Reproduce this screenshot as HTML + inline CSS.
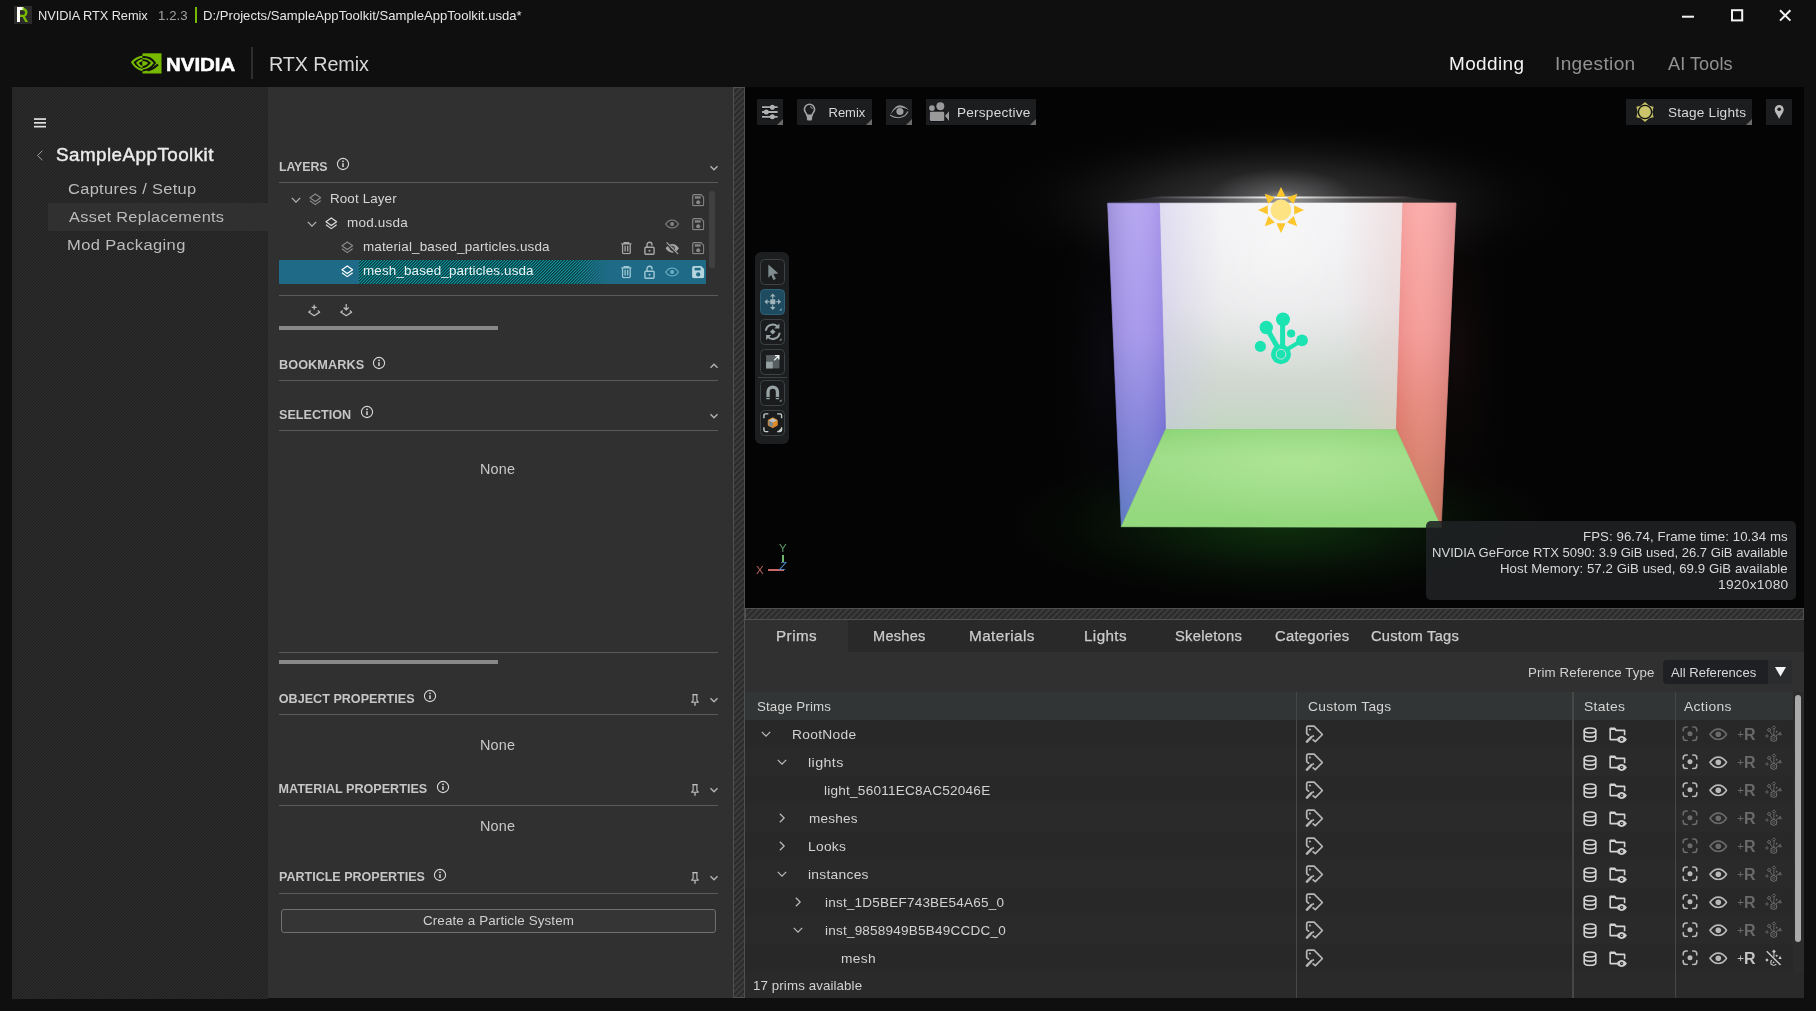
<!DOCTYPE html>
<html lang="en"><head><meta charset="utf-8"><title>NVIDIA RTX Remix</title>
<style>
html,body{margin:0;padding:0}
body{width:1816px;height:1011px;background:#0f0f0f;position:relative;overflow:hidden;font-family:"Liberation Sans",sans-serif;}
.t{position:absolute;white-space:pre;line-height:20px;height:20px;}
.i{position:absolute;overflow:visible;}
.hatch{background-color:#202020;background-image:repeating-linear-gradient(135deg,#2a2a2a 0,#2a2a2a 0.7px,#202020 1.06px,#202020 1.77px,#2a2a2a 2.1213px);}
.split{background-color:#2a2a2a;background-image:repeating-linear-gradient(135deg,#3a3a3a 0,#3a3a3a 1.5px,#2a2a2a 2.3px,#2a2a2a 3.4px,#3a3a3a 4.2px);border:1px solid #505050;box-sizing:border-box;}
.hl{position:absolute;height:1px;background:#5a5a5a;}
</style></head><body><div id="root" style="position:absolute;left:0;top:0;width:1816px;height:1011px;will-change:transform;">
<div style="position:absolute;left:12px;top:87px;width:256px;height:912px;"><div class="hatch" style="width:100%;height:100%"></div></div><div style="position:absolute;left:268px;top:87px;width:465px;height:911px;background:#303030;"></div><div style="position:absolute;left:733px;top:87px;width:12px;height:911px;"><div class="split" style="width:100%;height:100%"></div></div><div style="position:absolute;left:745px;top:608px;width:1059px;height:12px;"><div class="split" style="width:100%;height:100%"></div></div><div style="position:absolute;left:745px;top:620px;width:1059px;height:378px;background:#2a2a2a;"></div><svg width="0" height="0" style="position:absolute"><defs>
<symbol id="chev-d" viewBox="0 0 10 10"><path d="M1.500 3.200L5 6.800 8.500 3.200" fill="none" stroke="currentColor"/></symbol>
<symbol id="chev-u" viewBox="0 0 10 10"><path d="M1.500 6.800L5 3.200 8.500 6.800" fill="none" stroke="currentColor"/></symbol>
<symbol id="chev-r" viewBox="0 0 10 10"><path d="M3.200 1.500L6.800 5 3.200 8.500" fill="none" stroke="currentColor"/></symbol>
<symbol id="chev-l" viewBox="0 0 10 14"><path d="M8 1L2 7 8 13" fill="none" stroke="currentColor" stroke-width="1.2"/></symbol>
<symbol id="info" viewBox="0 0 14 14"><circle cx="7" cy="7" r="5.6" fill="none" stroke="currentColor" stroke-width="1.1"/><path d="M7 6.2V10" stroke="currentColor" stroke-width="1.5"/><circle cx="7" cy="4.3" r="0.9" fill="currentColor"/></symbol>
<symbol id="layers" viewBox="0 0 13 13"><path d="M6.500 1L12 4.900 6.500 8.800 1 4.900Z" fill="none" stroke="currentColor" stroke-width="1.250" stroke-linejoin="round"/><path d="M1 8.100L6.500 12 12 8.100" fill="none" stroke="currentColor" stroke-width="1.250" stroke-linejoin="round"/></symbol>
<symbol id="save-o" viewBox="0 0 12.400 12.400"><path d="M.7 1.900a1.200 1.200 0 0 1 1.200-1.200H9L11.700 3.400V10.500a1.200 1.200 0 0 1-1.200 1.200H1.900a1.200 1.200 0 0 1-1.200-1.200Z" fill="none" stroke="currentColor" stroke-width="1.200"/><rect x="2.800" y="2.300" width="5.800" height="2.300" fill="currentColor"/><circle cx="6.200" cy="8.300" r="2" fill="currentColor"/></symbol>
<symbol id="save-f" viewBox="0 0 12.400 12.400"><path d="M.1 1.900A1.800 1.800 0 0 1 1.900 .1H9.200L12.300 3.200V10.500A1.800 1.800 0 0 1 10.500 12.300H1.900A1.800 1.800 0 0 1 .1 10.500Z" fill="currentColor"/><rect x="2.600" y="1.800" width="6" height="2.600" fill="#1f6b87"/><circle cx="6.200" cy="8.400" r="2.100" fill="#1f6b87"/></symbol>
<symbol id="eye-o" viewBox="0 0 15 10"><path d="M.7 5C2.700 2 5 .7 7.500 .7S12.300 2 14.300 5C12.300 8 10 9.300 7.500 9.300S2.700 8 .700 5Z" fill="none" stroke="currentColor" stroke-width="1.150"/><circle cx="7.500" cy="5" r="2" fill="currentColor"/></symbol>
<symbol id="eye-x" viewBox="0 0 15 13"><path d="M.6 6.500C2.600 3.400 5 2 7.500 2S12.400 3.400 14.400 6.500C12.400 9.600 10 11 7.500 11S2.600 9.600 .600 6.500Z" fill="currentColor"/><circle cx="7.500" cy="6.500" r="2.300" fill="none" stroke="#303030" stroke-width="1"/><circle cx="8" cy="6" r=".8" fill="#303030"/><path d="M1 .6L13 12.800" stroke="#303030" stroke-width="2.800"/><path d="M1.600 .4L13.600 12.600" stroke="currentColor" stroke-width="1.200"/></symbol>
<symbol id="lock" viewBox="0 0 11 14"><rect x=".9" y="6.300" width="9.200" height="7" rx="1" fill="none" stroke="currentColor" stroke-width="1.400"/><path d="M3 6.300V3.800a2.500 2.500 0 0 1 5 0V4.600" fill="none" stroke="currentColor" stroke-width="1.400"/><rect x="4.600" y="8.800" width="1.800" height="1.800" fill="currentColor"/></symbol>
<symbol id="trash" viewBox="0 0 11 12.500"><path d="M1.600 2.300V10.600a1.200 1.200 0 0 0 1.200 1.200H8.200a1.200 1.200 0 0 0 1.200-1.200V2.300" fill="none" stroke="currentColor" stroke-width="1.300"/><path d="M.2 1.800H10.800M3.200 1.600V.7H7.800V1.600" fill="none" stroke="currentColor" stroke-width="1.300"/><path d="M4.200 3.800V9.600M6.800 3.800V9.600" fill="none" stroke="currentColor" stroke-width="1.300"/></symbol>
<symbol id="imp-new" viewBox="0 0 12.400 12.400"><path d="M6.200 .8V5.800M3.700 3.300H8.700" stroke="currentColor" stroke-width="1.200" fill="none"/><path d="M2.700 6.500L.7 8.100 6.200 11.700 11.700 8.100 9.700 6.500" fill="none" stroke="currentColor" stroke-width="1.200"/></symbol>
<symbol id="imp-ex" viewBox="0 0 12.400 12.400"><path d="M6.200 -.4V5.800M3.700 3.500L6.200 6 8.700 3.500" stroke="currentColor" stroke-width="1.200" fill="none"/><path d="M2.700 6.500L.7 8.100 6.200 11.700 11.700 8.100 9.700 6.500" fill="none" stroke="currentColor" stroke-width="1.200"/></symbol>
<symbol id="pin" viewBox="0 0 8 12"><path d="M2.100 .6H5.900V6.600L7.300 8.200H.7L2.100 6.600Z" fill="none" stroke="currentColor" stroke-width="1.100" stroke-linejoin="round"/><path d="M1.500 .6H6.500" stroke="currentColor" stroke-width="1.100"/><path d="M4 8.200V11.800" stroke="currentColor" stroke-width="1.300"/></symbol>
</defs></svg><svg width="0" height="0" style="position:absolute"><defs>
<symbol id="sliders" viewBox="0 0 18 16"><g transform="translate(-.3,.6)" stroke="#000810" fill="#000810"><path d="M1 3.100H17M1 8H17M1 12.900H17" stroke-width="1.800"/><circle cx="11.600" cy="3.100" r="2.600"/><circle cx="5.400" cy="8" r="2.600"/><circle cx="11.600" cy="12.900" r="2.600"/></g><path d="M1 3.100H17M1 8H17M1 12.900H17" stroke="currentColor" stroke-width="1.800"/><circle cx="11.600" cy="3.100" r="2.600" fill="currentColor"/><circle cx="5.400" cy="8" r="2.600" fill="currentColor"/><circle cx="11.600" cy="12.900" r="2.600" fill="currentColor"/></symbol>
<symbol id="bulb" viewBox="0 0 14 20"><path d="M7 1.300a5.500 5.500 0 0 0-5.500 5.500c0 2.300 1.400 3.500 2.200 4.900 .4 .7 .5 1.300 .6 2H9.700c.1-.7 .2-1.300 .6-2 .8-1.400 2.200-2.600 2.200-4.900A5.500 5.500 0 0 0 7 1.300Z" fill="none" stroke="currentColor" stroke-width="1.700"/><path d="M4.200 12.500H9.800V17.200a1.700 1.700 0 0 1-1.700 1.700H5.900a1.700 1.700 0 0 1-1.700-1.700Z" fill="currentColor"/><path d="M7.600 3.900a2.800 2.800 0 0 1 2.500 2.500" fill="none" stroke="currentColor" stroke-width="1"/></symbol>
<symbol id="eye-f" viewBox="0 0 20 12"><path d="M0.500 6.500C4 1.500 7.500 .6 10.500 .6S17 2 19.500 6.500C17 10 13.500 11.400 10.500 11.400S4 10.500 .500 6.500Z" fill="currentColor" opacity="0.550"/><path d="M0.500 6.500C4 1.500 7.500 .6 10.500 .6S17 2 19.500 6.500" fill="none" stroke="currentColor" stroke-width="1.400"/><circle cx="10.500" cy="5.300" r="3.700" fill="currentColor"/><circle cx="10.500" cy="5.300" r="1.700" fill="#1c1d1f"/></symbol>
<symbol id="camera" viewBox="0 0 22 20"><circle cx="4.800" cy="6" r="3.400" fill="currentColor"/><circle cx="12.500" cy="4.600" r="4.200" fill="currentColor"/><rect x="1.500" y="9.300" width="15" height="9.600" rx="1.200" fill="currentColor"/><path d="M16.500 14.200L21.200 10.200V18.800Z" fill="currentColor"/></symbol>
<symbol id="sunbadge" viewBox="0 0 20 22"><path d="M10 .9L14.200 4.800 18.600 5.700 17.300 11 18.600 16.300 14.200 17.200 10 21.100 5.800 17.200 1.400 16.300 2.700 11 1.400 5.700 5.800 4.800Z" fill="#c4be66"/><circle cx="10" cy="11" r="6.600" fill="#cac46a" stroke="#101214" stroke-width="1.300"/></symbol>
<symbol id="mappin" viewBox="0 0 12 18"><path d="M6 .8a5.200 5.200 0 0 0-5.200 5.200C.8 9.500 4.500 13 6 17.200 7.500 13 11.200 9.500 11.200 6A5.200 5.200 0 0 0 6 .800Z" fill="currentColor"/><circle cx="6" cy="5.800" r="2.100" fill="#1c1d1f"/></symbol>
<symbol id="t-cursor" viewBox="0 0 26 26"><path d="M8.500 5.500L18.800 14.800 13.800 15.200 16.200 20.300 13.700 21.400 11.400 16.200 8.500 19.200Z" fill="currentColor"/></symbol>
<symbol id="t-move" viewBox="0 0 26 26"><rect x="10.400" y="10.400" width="5.200" height="5.200" rx=".8" fill="currentColor"/><path d="M13 4.500L15.800 7.600H10.200ZM13 21.500L15.800 18.400H10.200ZM4.500 13L7.600 10.200V15.800ZM21.500 13L18.400 10.200V15.800Z" fill="currentColor"/><path d="M13 7.200V10M13 16V18.800M7.200 13H10M16 13H18.800" stroke="currentColor" stroke-width="1.100"/><path d="M22 19.500V22H19.500Z" fill="currentColor"/></symbol>
<symbol id="t-rot" viewBox="0 0 26 26"><path d="M6 12a7 7 0 0 1 12-4.200M20 14a7 7 0 0 1-12 4.200" fill="none" stroke="currentColor" stroke-width="2.100"/><path d="M19.800 4.500V9.800H14.500ZM6.200 21.500V16.200H11.500Z" fill="currentColor"/><path d="M13 10.200L15.800 13 13 15.800 10.200 13Z" fill="currentColor"/><path d="M22 19.500V22H19.500Z" fill="currentColor"/></symbol>
<symbol id="t-scale" viewBox="0 0 26 26"><rect x="6.200" y="6.200" width="13.600" height="13.600" fill="currentColor" opacity=".5"/><rect x="6.200" y="13" width="6.800" height="6.800" fill="currentColor"/><path d="M14.500 11.500L19 7M15.200 6.800H19.200V10.800" fill="none" stroke="#e8f0f0" stroke-width="1.300"/></symbol>
<symbol id="t-mag" viewBox="0 0 26 26"><path d="M8.200 19.500V12a4.800 4.800 0 0 1 9.600 0V19.500" fill="none" stroke="currentColor" stroke-width="3.400"/><path d="M6.500 17.800H9.900M16.100 17.800H19.500" stroke="#1c1e1f" stroke-width="1"/><path d="M22 19.500V22H19.500Z" fill="currentColor"/></symbol>
<symbol id="t-frame" viewBox="0 0 26 26"><path d="M4 8.500V5.500A1.500 1.500 0 0 1 5.500 4H8.500M17.500 4H20.500A1.500 1.500 0 0 1 22 5.500V8.500M22 17.500V20.500A1.500 1.500 0 0 1 20.500 22H17.500M8.500 22H5.500A1.500 1.500 0 0 1 4 20.500V17.500" fill="none" stroke="#c4cccc" stroke-width="1.400"/><path d="M13 8L17.600 10.400V15.600L13 18 8.400 15.600V10.400Z" fill="#e08a2a"/><path d="M13 8L17.600 10.400 13 12.800 8.400 10.400Z" fill="#b8c4c8"/><path d="M13 12.800V18L8.400 15.600V10.400Z" fill="#7a8a90"/><path d="M13 8L17.600 10.400V15.600L13 18 8.400 15.600V10.400Z" fill="none" stroke="#e08a2a" stroke-width=".9"/><path d="M21.500 18.500V21.500H18.500Z" fill="#c4cccc"/></symbol>
</defs></svg><svg width="0" height="0" style="position:absolute"><defs>
<symbol id="tag" viewBox="0 0 18 18"><path d="M8.200 14.900L10.300 16.700 17.400 9.500 9.100 1.200H3.200Q1.700 1.200 1.700 2.700V8.600L3.500 10.100" fill="none" stroke="currentColor" stroke-width="1.700" stroke-linejoin="round" stroke-linecap="round"/><circle cx="4.900" cy="4.500" r="1.050" fill="currentColor"/><path d="M2 16.700L6.400 12" stroke="currentColor" stroke-width="2.500" stroke-linecap="round"/><path d="M7 11.400L8.400 9.900 8.900 11.600Z" fill="currentColor" stroke="currentColor" stroke-width=".6" stroke-linejoin="round"/></symbol>
<symbol id="db" viewBox="0 0 14 15"><ellipse cx="7" cy="3.300" rx="5.800" ry="2.500" fill="none" stroke="currentColor" stroke-width="1.600"/><path d="M1.200 3.300V11.600C1.200 13 3.800 14.200 7 14.200S12.800 13 12.800 11.600V3.300M1.200 7.400C1.200 8.800 3.800 10 7 10S12.800 8.800 12.800 7.400" fill="none" stroke="currentColor" stroke-width="1.600"/></symbol>
<symbol id="foldeye" viewBox="0 0 18 16"><path d="M8 12.600H1.200V1.800H5.600L7 3.400H15.600V8.300" fill="none" stroke="currentColor" stroke-width="1.600" stroke-linejoin="round"/><path d="M.8 .6H6L7.800 3H.8Z" fill="currentColor"/><path d="M7.400 12.500C9.300 9.800 11.200 9 12.600 9S16 9.800 17.900 12.500C16 15.200 14 16 12.600 16S9.300 15.200 7.400 12.500Z" fill="currentColor"/><circle cx="12.600" cy="12.500" r="1.700" fill="#2a2a2a"/><circle cx="12.800" cy="12.300" r=".6" fill="currentColor"/></symbol>
<symbol id="framedot" viewBox="0 0 16 16"><path d="M1 5.200V4A3 3 0 0 1 4 1H5.200M10.800 1H12A3 3 0 0 1 15 4V5.200M15 10.800V12A3 3 0 0 1 12 15H10.800M5.200 15H4A3 3 0 0 1 1 12V10.800" fill="none" stroke="currentColor" stroke-width="1.600" stroke-linecap="round"/><circle cx="8" cy="8" r="2.600" fill="currentColor"/></symbol>
<symbol id="eye2" viewBox="0 0 19 13"><path d="M.9 6.500C3.500 2.700 6.500 1.100 9.500 1.100S15.500 2.700 18.100 6.500C15.500 10.300 12.500 11.900 9.500 11.900S3.500 10.300 .900 6.500Z" fill="none" stroke="currentColor" stroke-width="1.700" stroke-linejoin="round"/><circle cx="9.500" cy="6.500" r="2.900" fill="currentColor"/></symbol>
<symbol id="part" viewBox="0 0 18 17"><path d="M9.200 4.200V10.500M5 6.200L7.800 10.800M14.200 8.800L11 11.200" fill="none" stroke="currentColor" stroke-width="1"/><path d="M9.200 .7L10.900 2.500 9.200 4.300 7.500 2.500Z" fill="none" stroke="currentColor" stroke-width="1"/><circle cx="4.200" cy="5" r="1.500" fill="none" stroke="currentColor" stroke-width="1"/><circle cx="12" cy="6.800" r=".9" fill="currentColor"/><path d="M15.500 7.300L16.900 9.900H14.100Z" fill="none" stroke="currentColor" stroke-width="1" stroke-linejoin="round"/><path d="M2 9.800L3.400 11.200 2 12.600 .6 11.200Z" fill="none" stroke="currentColor" stroke-width="1"/><path d="M9 10.400L11.900 12.100V15.300L9 17 6.100 15.300V12.100Z" fill="none" stroke="currentColor" stroke-width="1.100" stroke-linejoin="round"/><circle cx="9" cy="13.700" r="1.100" fill="none" stroke="currentColor" stroke-width=".8"/></symbol>
<symbol id="partx" viewBox="0 0 18 17"><path d="M9.200 4.200V8" fill="none" stroke="currentColor" stroke-width="1.100"/><path d="M9.200 .3L11.100 2.400 9.200 4.500 7.300 2.400Z" fill="currentColor"/><circle cx="12" cy="6.800" r="1.100" fill="currentColor"/><path d="M15.500 6.900L17.200 10.100H13.800Z" fill="currentColor"/><path d="M2 9.500L3.700 11.200 2 12.900 .3 11.200Z" fill="currentColor"/><path d="M7.200 11.300L6.100 12.100V15.300L9 17 11.600 15.500" fill="none" stroke="currentColor" stroke-width="1.200" stroke-linejoin="round"/><circle cx="8.800" cy="13.600" r=".9" fill="currentColor"/><path d="M1.800 2.200L16 16.400" stroke="currentColor" stroke-width="1.500"/></symbol>
</defs></svg><div style="position:absolute;left:14px;top:6px;width:18px;height:18px;background:#2b2b2b;"></div><span class="t" style="left:15.6px;top:4.6px;font-size:20.5px;font-weight:bold;color:#76b900;transform-origin:0 50%;transform:scaleX(0.84);">R</span><div style="position:absolute;left:17px;top:7.4px;width:3.1999999999999993px;height:14.799999999999999px;background:#ffffff;"></div><div style="position:absolute;left:20.2px;top:7.4px;width:3.8000000000000007px;height:2.1999999999999993px;background:linear-gradient(90deg,#fff 0,#fff 40%,#76b900 100%);"></div><span class="t" style="left:38.2px;top:6px;font-size:13px;color:#e6e6e6;transform-origin:0 50%;transform:scaleX(0.9852);letter-spacing:-0.074px;">NVIDIA RTX Remix</span><span class="t" style="left:157.7px;top:6px;font-size:13px;color:#a0a0a0;transform-origin:0 50%;transform:scaleX(1.0145);letter-spacing:0.065px;">1.2.3</span><div style="position:absolute;left:195px;top:7px;width:1.5px;height:16px;background:#76b900;"></div><span class="t" style="left:202.9px;top:6px;font-size:13px;color:#e6e6e6;transform-origin:0 50%;transform:scaleX(1.0056);letter-spacing:0.023px;">D:/Projects/SampleAppToolkit/SampleAppToolkit.usda*</span><svg class="i" style="left:1676px;top:4px" width="124" height="24" fill="none" stroke="#f2f2f2" stroke-width="2">
<path d="M6 12.7H18"/><rect x="56" y="6.2" width="10.2" height="10.2"/><path d="M104 6.2L114.4 16.6M114.4 6.2L104 16.6"/></svg><svg class="i" style="left:131px;top:52.5px" width="31" height="21" viewBox="0 0 31 21">
<rect x="11.5" y="0.3" width="19" height="20.2" fill="#76b900"/>
<g fill="none" stroke="#76b900" stroke-width="2.1"><path d="M12 3.600C7 4.200 3 7 1.200 9.200 3.200 12.600 7.500 16.400 12 17.100"/><path d="M12 6.900C9.500 7.300 7.300 8.600 6.300 9.800 7.300 11.600 9.500 13.600 12 14.200"/></g>
<g fill="none" stroke="#0f0f0f" stroke-width="1.900"><path d="M11.500 4.100C17 3.600 21.500 6.500 24 10 21.500 13.500 17 17.300 11.500 17.600"/><path d="M11.500 7.200C14.500 6.800 17 8.200 18.600 10 17 12 14.500 14 11.500 14.400"/><path d="M16.500 17.500C20.500 16.500 24.500 14 27 11.500"/></g>
<path d="M11.500 9.300C13.200 9 14.600 9.800 15.300 10.500 14.600 11.600 13.200 12.300 11.500 12.300Z" fill="#76b900"/>
</svg><span class="t" style="left:166.3px;top:54.5px;font-size:18.3px;font-weight:bold;color:#fff;transform-origin:0 50%;transform:scaleX(1.1174);-webkit-text-stroke:0.5px #fff;">NVIDIA</span><div style="position:absolute;left:251px;top:47px;width:2px;height:32px;background:#2e2e2e;"></div><span class="t" style="left:268.8px;top:54px;font-size:20px;color:#d8d8d8;transform-origin:0 50%;transform:scaleX(0.9882);letter-spacing:-0.099px;">RTX Remix</span><span class="t" style="left:1449.2px;top:54px;font-size:18px;color:#f4f4f4;transform-origin:0 50%;transform:scaleX(1.0532);letter-spacing:0.373px;">Modding</span><span class="t" style="left:1555.1px;top:54px;font-size:18px;color:#929292;transform-origin:0 50%;transform:scaleX(1.0596);letter-spacing:0.330px;">Ingestion</span><span class="t" style="left:1667.7px;top:54px;font-size:18px;color:#929292;transform-origin:0 50%;transform:scaleX(1.0080);letter-spacing:0.047px;">AI Tools</span><svg class="i" style="left:34px;top:118px" width="12" height="10" fill="#e0e0e0"><rect y="0.2" width="12" height="1.7"/><rect y="4" width="12" height="1.7"/><rect y="7.8" width="12" height="1.7"/></svg><svg class="i" style="left:35.5px;top:148.5px;color:#a8a8a8;" width="8" height="13"><use href="#chev-l"/></svg><span class="t" style="left:56.0px;top:145px;font-size:17.6px;color:#ececec;transform-origin:0 50%;transform:scaleX(1.0709);letter-spacing:0.412px;-webkit-text-stroke:0.4px #ececec;">SampleAppToolkit</span><div style="position:absolute;left:48px;top:203px;width:220px;height:28px;background:#303030;"></div><span class="t" style="left:67.7px;top:179px;font-size:15.5px;color:#bcbcbc;transform-origin:0 50%;transform:scaleX(1.0614);letter-spacing:0.296px;">Captures / Setup</span><span class="t" style="left:68.5px;top:207px;font-size:15.5px;color:#bcbcbc;transform-origin:0 50%;transform:scaleX(1.0545);letter-spacing:0.287px;">Asset Replacements</span><span class="t" style="left:67.2px;top:235px;font-size:15.5px;color:#bcbcbc;transform-origin:0 50%;transform:scaleX(1.0652);letter-spacing:0.356px;">Mod Packaging</span><span class="t" style="left:278.5px;top:157px;font-size:12.6px;color:#c6c6c6;transform-origin:0 50%;transform:scaleX(0.9821);letter-spacing:-0.118px;font-weight:bold;">LAYERS</span><svg class="i" style="left:335.5px;top:157px;color:#d8d8d8;" width="14" height="14"><use href="#info"/></svg><svg class="i" style="left:709px;top:162.8px;color:#b4b4b4;stroke-width:1.35;" width="10" height="10"><use href="#chev-d"/></svg><div class="hl" style="left:279px;top:182px;width:439px"></div><span class="t" style="left:278.5px;top:355px;font-size:12.6px;color:#c6c6c6;transform-origin:0 50%;transform:scaleX(1.0086);letter-spacing:0.059px;font-weight:bold;">BOOKMARKS</span><svg class="i" style="left:372px;top:355.5px;color:#d8d8d8;" width="14" height="14"><use href="#info"/></svg><svg class="i" style="left:709px;top:360.90000000000003px;color:#b4b4b4;stroke-width:1.35;" width="10" height="10"><use href="#chev-u"/></svg><div class="hl" style="left:279px;top:380px;width:439px"></div><span class="t" style="left:279.0px;top:405px;font-size:12.6px;color:#c6c6c6;letter-spacing:0.006px;font-weight:bold;">SELECTION</span><svg class="i" style="left:360px;top:405.3px;color:#d8d8d8;" width="14" height="14"><use href="#info"/></svg><svg class="i" style="left:709px;top:410.8px;color:#b4b4b4;stroke-width:1.35;" width="10" height="10"><use href="#chev-d"/></svg><div class="hl" style="left:279px;top:430px;width:439px"></div><span class="t" style="left:278.8px;top:689px;font-size:12.6px;color:#c6c6c6;font-weight:bold;">OBJECT PROPERTIES</span><svg class="i" style="left:423px;top:689.3px;color:#d8d8d8;" width="14" height="14"><use href="#info"/></svg><svg class="i" style="left:709px;top:694.9px;color:#b4b4b4;stroke-width:1.35;" width="10" height="10"><use href="#chev-d"/></svg><svg class="i" style="left:691.2px;top:694.0px;color:#c0c0c0;" width="8" height="12"><use href="#pin"/></svg><div class="hl" style="left:279px;top:714px;width:439px"></div><span class="t" style="left:278.5px;top:779px;font-size:12.6px;color:#c6c6c6;letter-spacing:0.008px;font-weight:bold;">MATERIAL PROPERTIES</span><svg class="i" style="left:436px;top:780px;color:#d8d8d8;" width="14" height="14"><use href="#info"/></svg><svg class="i" style="left:709px;top:785.0px;color:#b4b4b4;stroke-width:1.35;" width="10" height="10"><use href="#chev-d"/></svg><svg class="i" style="left:691.2px;top:784.1px;color:#c0c0c0;" width="8" height="12"><use href="#pin"/></svg><div class="hl" style="left:279px;top:805px;width:439px"></div><span class="t" style="left:278.5px;top:867px;font-size:12.6px;color:#c6c6c6;transform-origin:0 50%;transform:scaleX(0.9969);letter-spacing:-0.017px;font-weight:bold;">PARTICLE PROPERTIES</span><svg class="i" style="left:433px;top:868px;color:#d8d8d8;" width="14" height="14"><use href="#info"/></svg><svg class="i" style="left:709px;top:872.6999999999999px;color:#b4b4b4;stroke-width:1.35;" width="10" height="10"><use href="#chev-d"/></svg><svg class="i" style="left:691.2px;top:871.8px;color:#c0c0c0;" width="8" height="12"><use href="#pin"/></svg><div class="hl" style="left:279px;top:893px;width:439px"></div><div style="position:absolute;left:279px;top:260px;width:427px;height:24px;background:#1f6b87;"></div><div style="position:absolute;left:359px;top:260px;width:250px;height:24px;background-color:#13969a;background-image:repeating-linear-gradient(135deg,#0b3d45 0,#0b3d45 0.55px,#13969a 1.06px,#13969a 1.6px,#0b3d45 2.1213px);-webkit-mask-image:linear-gradient(90deg,#000 0,#000 86%,transparent 100%);mask-image:linear-gradient(90deg,#000 0,#000 86%,transparent 100%);"></div><svg class="i" style="left:290px;top:194.2px;color:#b8b8b8;stroke-width:1;" width="12" height="12"><use href="#chev-d"/></svg><svg class="i" style="left:306px;top:218.2px;color:#b8b8b8;stroke-width:1;" width="12" height="12"><use href="#chev-d"/></svg><svg class="i" style="left:308.7px;top:193.4px;color:#8a8a8a;" width="12.6" height="12.6"><use href="#layers"/></svg><svg class="i" style="left:324.8px;top:217.4px;color:#dcdcdc;" width="12.6" height="12.6"><use href="#layers"/></svg><svg class="i" style="left:340.9px;top:241.4px;color:#8a8a8a;" width="12.6" height="12.6"><use href="#layers"/></svg><svg class="i" style="left:340.9px;top:265.4px;color:#ffffff;" width="12.6" height="12.6"><use href="#layers"/></svg><span class="t" style="left:330.3px;top:189px;font-size:13px;color:#d6d6d6;transform-origin:0 50%;transform:scaleX(1.0288);letter-spacing:0.129px;">Root Layer</span><span class="t" style="left:346.8px;top:213px;font-size:13px;color:#d6d6d6;transform-origin:0 50%;transform:scaleX(1.0382);letter-spacing:0.197px;">mod.usda</span><span class="t" style="left:362.9px;top:237px;font-size:13px;color:#d6d6d6;transform-origin:0 50%;transform:scaleX(1.0350);letter-spacing:0.141px;">material_based_particles.usda</span><span class="t" style="left:362.9px;top:261px;font-size:13px;color:#e8f4f4;transform-origin:0 50%;transform:scaleX(1.0323);letter-spacing:0.140px;">mesh_based_particles.usda</span><svg class="i" style="left:691.8px;top:193.8px;color:#868686;" width="12.4" height="12.4"><use href="#save-o"/></svg><svg class="i" style="left:691.8px;top:217.8px;color:#868686;" width="12.4" height="12.4"><use href="#save-o"/></svg><svg class="i" style="left:691.8px;top:241.8px;color:#868686;" width="12.4" height="12.4"><use href="#save-o"/></svg><svg class="i" style="left:691.8px;top:265.8px;color:#b4d4de;" width="12.4" height="12.4"><use href="#save-f"/></svg><svg class="i" style="left:665px;top:219px;color:#868686;" width="14.2" height="10"><use href="#eye-o"/></svg><svg class="i" style="left:664.8px;top:241.8px;color:#a6a6a6;" width="14.6" height="12.6"><use href="#eye-x"/></svg><svg class="i" style="left:665px;top:267px;color:#6fb2c6;" width="14.2" height="10"><use href="#eye-o"/></svg><svg class="i" style="left:644.3px;top:241px;color:#a8a8a8;" width="11" height="14"><use href="#lock"/></svg><svg class="i" style="left:620.7px;top:241.8px;color:#a8a8a8;" width="10.8" height="12.4"><use href="#trash"/></svg><svg class="i" style="left:644.3px;top:265px;color:#a0c8d4;" width="11" height="14"><use href="#lock"/></svg><svg class="i" style="left:620.7px;top:265.8px;color:#a0c8d4;" width="10.8" height="12.4"><use href="#trash"/></svg><div style="position:absolute;left:709.2px;top:191.2px;width:5.699999999999932px;height:77.10000000000002px;background:#404040;border-radius:2.8px;"></div><div class="hl" style="left:279px;top:295px;width:439px"></div><svg class="i" style="left:308.3px;top:304.4px;color:#c0c0c0;" width="12.4" height="12.4"><use href="#imp-new"/></svg><svg class="i" style="left:340.3px;top:304.4px;color:#c0c0c0;" width="12.4" height="12.4"><use href="#imp-ex"/></svg><div style="position:absolute;left:279px;top:326px;width:219px;height:4px;background:#888888;"></div><span class="t" style="left:480.1px;top:459px;font-size:14px;color:#c8c8c8;transform-origin:0 50%;transform:scaleX(1.0293);letter-spacing:0.201px;">None</span><div class="hl" style="left:279px;top:652px;width:439px"></div><div style="position:absolute;left:279px;top:660px;width:219px;height:4px;background:#888888;"></div><span class="t" style="left:480.1px;top:735px;font-size:14px;color:#c8c8c8;transform-origin:0 50%;transform:scaleX(1.0293);letter-spacing:0.201px;">None</span><span class="t" style="left:480.1px;top:816px;font-size:14px;color:#c8c8c8;transform-origin:0 50%;transform:scaleX(1.0293);letter-spacing:0.201px;">None</span><div style="position:absolute;left:281px;top:909px;width:435px;height:23.5px;border:1px solid #707070;border-radius:3px;background:#353535;box-sizing:border-box;"></div><span class="t" style="left:422.6px;top:911px;font-size:13px;color:#d0d0d0;transform-origin:0 50%;transform:scaleX(1.0299);letter-spacing:0.120px;">Create a Particle System</span><svg class="i" style="left:745px;top:87px" width="1059" height="521" viewBox="0 0 1059 521">
<defs>
<radialGradient id="gTop" cx="50%" cy="50%" r="50%"><stop offset="0" stop-color="#e8e8f0" stop-opacity="0.26"/><stop offset="0.45" stop-color="#d8d8e0" stop-opacity="0.12"/><stop offset="1" stop-color="#000" stop-opacity="0"/></radialGradient>
<radialGradient id="gTop2" cx="50%" cy="50%" r="50%"><stop offset="0" stop-color="#ffffff" stop-opacity="0.55"/><stop offset="0.3" stop-color="#ffffff" stop-opacity="0.22"/><stop offset="1" stop-color="#fff" stop-opacity="0"/></radialGradient>
<radialGradient id="gBot2" cx="50%" cy="50%" r="50%"><stop offset="0" stop-color="#30c030" stop-opacity="0.23"/><stop offset="0.4" stop-color="#2cb82c" stop-opacity="0.13"/><stop offset="0.7" stop-color="#28a028" stop-opacity="0.05"/><stop offset="1" stop-color="#208020" stop-opacity="0"/></radialGradient>
<linearGradient id="gBotL" x1="0" y1="0" x2="0" y2="1"><stop offset="0" stop-color="#1c8a1c" stop-opacity="0.42"/><stop offset="0.35" stop-color="#147014" stop-opacity="0.2"/><stop offset="1" stop-color="#0a400a" stop-opacity="0"/></linearGradient>
<linearGradient id="gBotM" x1="0" y1="0" x2="1" y2="0"><stop offset="0" stop-color="#fff" stop-opacity="0"/><stop offset="0.12" stop-color="#fff" stop-opacity="1"/><stop offset="0.88" stop-color="#fff" stop-opacity="1"/><stop offset="1" stop-color="#fff" stop-opacity="0"/></linearGradient>
<mask id="mBot" maskContentUnits="objectBoundingBox"><rect width="1" height="1" fill="url(#gBotM)"/></mask>
<radialGradient id="gLeft" cx="50%" cy="50%" r="50%"><stop offset="0" stop-color="#8070d0" stop-opacity="0.06"/><stop offset="1" stop-color="#000" stop-opacity="0"/></radialGradient>
<radialGradient id="gRight" cx="50%" cy="50%" r="50%"><stop offset="0" stop-color="#d06060" stop-opacity="0.07"/><stop offset="1" stop-color="#000" stop-opacity="0"/></radialGradient>
<radialGradient id="gBot" cx="50%" cy="50%" r="50%"><stop offset="0" stop-color="#30b030" stop-opacity="0.22"/><stop offset="1" stop-color="#000" stop-opacity="0"/></radialGradient>
<linearGradient id="wBack" x1="0" y1="0" x2="0" y2="1"><stop offset="0" stop-color="#f0eff2"/><stop offset="0.45" stop-color="#e6e6e8"/><stop offset="0.8" stop-color="#d0d8d0"/><stop offset="1" stop-color="#c3d6c2"/></linearGradient>
<radialGradient id="wBackHi" cx="50%" cy="18%" r="60%"><stop offset="0" stop-color="#ffffff" stop-opacity="0.55"/><stop offset="1" stop-color="#ffffff" stop-opacity="0"/></radialGradient>
<linearGradient id="wBackSideL" x1="0" y1="0" x2="1" y2="0"><stop offset="0" stop-color="#c4bcf0" stop-opacity="0.38"/><stop offset="0.25" stop-color="#c8c4e8" stop-opacity="0"/></linearGradient>
<linearGradient id="wBackSideR" x1="1" y1="0" x2="0" y2="0"><stop offset="0" stop-color="#f0c4c4" stop-opacity="0.38"/><stop offset="0.25" stop-color="#e8c4c4" stop-opacity="0"/></linearGradient>
<linearGradient id="wLeft" x1="0" y1="0" x2="0" y2="1"><stop offset="0" stop-color="#b3a3f0"/><stop offset="0.4" stop-color="#a596ea"/><stop offset="0.7" stop-color="#8282da"/><stop offset="1" stop-color="#5c79c4"/></linearGradient>
<linearGradient id="wLeftX" x1="0" y1="0" x2="1" y2="0"><stop offset="0" stop-color="#000030" stop-opacity="0.12"/><stop offset="0.5" stop-color="#fff" stop-opacity="0.04"/><stop offset="1" stop-color="#2000a0" stop-opacity="0.12"/></linearGradient>
<linearGradient id="wRight" x1="0" y1="0" x2="0" y2="1"><stop offset="0" stop-color="#fbaaa8"/><stop offset="0.4" stop-color="#f49a96"/><stop offset="0.62" stop-color="#e6897c"/><stop offset="0.85" stop-color="#d47c68"/><stop offset="1" stop-color="#c8745c"/></linearGradient>
<linearGradient id="wRightX" x1="0" y1="0" x2="1" y2="0"><stop offset="0" stop-color="#a00000" stop-opacity="0.08"/><stop offset="0.4" stop-color="#fff" stop-opacity="0.04"/><stop offset="1" stop-color="#400020" stop-opacity="0.14"/></linearGradient>
<linearGradient id="wFloor" x1="0" y1="0" x2="0" y2="1"><stop offset="0" stop-color="#8dd577"/><stop offset="0.3" stop-color="#9edc87"/><stop offset="1" stop-color="#93d87d"/></linearGradient>
<radialGradient id="wFloorHi" cx="55%" cy="35%" r="55%"><stop offset="0" stop-color="#b4e89c" stop-opacity="0.7"/><stop offset="1" stop-color="#b4e89c" stop-opacity="0"/></radialGradient>
<linearGradient id="wCeil" x1="0" y1="0" x2="1" y2="0"><stop offset="0" stop-color="#1c1c20"/><stop offset="0.3" stop-color="#4a4a4e"/><stop offset="0.5" stop-color="#9a9a9c"/><stop offset="0.7" stop-color="#4a4848"/><stop offset="1" stop-color="#201c1c"/></linearGradient>
<linearGradient id="hiLine" x1="0" y1="0" x2="1" y2="0"><stop offset="0" stop-color="#fff" stop-opacity="0"/><stop offset="0.35" stop-color="#fff" stop-opacity="0.55"/><stop offset="0.5" stop-color="#fff" stop-opacity="1"/><stop offset="0.65" stop-color="#fff" stop-opacity="0.55"/><stop offset="1" stop-color="#fff" stop-opacity="0"/></linearGradient>
</defs>
<rect width="1059" height="521" fill="#040404"/>
<ellipse cx="536" cy="116" rx="300" ry="85" fill="url(#gTop)"/>
<ellipse cx="536" cy="111.5" rx="75" ry="30" fill="url(#gTop2)" opacity="0.75"/>
<ellipse cx="360" cy="273" rx="60" ry="240" fill="url(#gLeft)"/>
<ellipse cx="713" cy="263" rx="60" ry="240" fill="url(#gRight)"/>

<ellipse cx="536" cy="437" rx="270" ry="78" fill="url(#gBot2)"/>
<polygon points="362.7,116.2 415.0,109.3 658.0,109.3 711.0,116.0" fill="url(#wCeil)"/>
<rect x="405" y="109.6" width="262" height="1.8" fill="url(#hiLine)"/>
<polygon points="414.5,116.2 657.8,116.0 651.3,342.7 420.6,342.6" fill="url(#wBack)" stroke="url(#wBack)" stroke-width="0.7" stroke-linejoin="round"/>
<polygon points="414.5,116.2 657.8,116.0 651.3,342.7 420.6,342.6" fill="url(#wBackHi)"/>
<polygon points="414.5,116.2 657.8,116.0 651.3,342.7 420.6,342.6" fill="url(#wBackSideL)"/>
<polygon points="414.5,116.2 657.8,116.0 651.3,342.7 420.6,342.6" fill="url(#wBackSideR)"/>
<polygon points="362.7,116.2 414.5,116.2 420.6,342.6 376.3,439.7" fill="url(#wLeft)" stroke="url(#wLeft)" stroke-width="0.7" stroke-linejoin="round"/>
<polygon points="362.7,116.2 414.5,116.2 420.6,342.6 376.3,439.7" fill="url(#wLeftX)"/>
<polygon points="657.8,116.0 711.0,116.0 696.2,440.3 651.3,342.7" fill="url(#wRight)" stroke="url(#wRight)" stroke-width="0.7" stroke-linejoin="round"/>
<polygon points="657.8,116.0 711.0,116.0 696.2,440.3 651.3,342.7" fill="url(#wRightX)"/>
<polygon points="420.6,342.6 651.3,342.7 696.2,440.3 376.3,439.7" fill="url(#wFloor)" stroke="url(#wFloor)" stroke-width="0.7" stroke-linejoin="round"/>
<polygon points="420.6,342.6 651.3,342.7 696.2,440.3 376.3,439.7" fill="url(#wFloorHi)"/>
</svg><div style="position:absolute;left:757px;top:99px;width:26px;height:26px;background:#1c1d1f;"></div><svg class="i" style="left:760.9px;top:104px;color:#b0b0b0;" width="17.6" height="16"><use href="#sliders"/></svg><svg class="i" style="left:777px;top:119px" width="6" height="6"><path d="M6 0V6H0Z" fill="#6a6a6a"/></svg><div style="position:absolute;left:797px;top:99px;width:75px;height:26px;background:#1c1d1f;"></div><svg class="i" style="left:803.3px;top:103.2px;color:#a4a4a4;" width="13" height="18.6"><use href="#bulb"/></svg><svg class="i" style="left:866px;top:119px" width="6" height="6"><path d="M6 0V6H0Z" fill="#6a6a6a"/></svg><span class="t" style="left:828.5px;top:103px;font-size:13px;color:#d8d8d8;">Remix</span><div style="position:absolute;left:886px;top:99px;width:26px;height:26px;background:#1c1d1f;"></div><svg class="i" style="left:886px;top:99px" width="26" height="26" viewBox="0 0 26 26"><g transform="translate(-0.4,0.5)" fill="#00060c" stroke="#00060c"><path d="M4 16.200C7 10 10 6.200 13.700 6.200 17.500 6.200 20.500 8.500 22.900 11.200 20 9.600 17 8.500 13.700 8.500 10 8.500 7 12 4 16.200Z" stroke="none"/><circle cx="13.900" cy="12.500" r="3.600" stroke="none"/><path d="M4 16.200C8 18.600 13 19.100 16 18.100 19 17.100 21 14.600 22 12.600" fill="none" stroke-width="1.100"/></g><g fill="#9c9c9c" stroke="#9c9c9c"><path d="M4 16.200C7 10 10 6.200 13.700 6.200 17.500 6.200 20.500 8.500 22.900 11.200 20 9.600 17 8.500 13.700 8.500 10 8.500 7 12 4 16.200Z" stroke="none"/><circle cx="13.900" cy="12.500" r="3.600" stroke="none"/><path d="M4 16.200C8 18.600 13 19.100 16 18.100 19 17.100 21 14.600 22 12.600" fill="none" stroke-width="1.100"/></g></svg><svg class="i" style="left:906px;top:119px" width="6" height="6"><path d="M6 0V6H0Z" fill="#6a6a6a"/></svg><div style="position:absolute;left:926px;top:99px;width:110px;height:26px;background:#1c1d1f;"></div><svg class="i" style="left:926px;top:99px" width="26" height="26" viewBox="0 0 26 26"><g id="camg" fill="#00060c" transform="translate(-0.5,0.500)"><circle cx="5.900" cy="9.100" r="2.900"/><circle cx="14.300" cy="7.250" r="4"/><rect x="3.800" y="12.700" width="14.400" height="9.400" rx="1.300"/><path d="M18.900 17.100L23 12.300V21.900Z"/></g><g fill="#9a9a9a"><circle cx="5.900" cy="9.100" r="2.900"/><circle cx="14.300" cy="7.250" r="4"/><rect x="3.800" y="12.700" width="14.400" height="9.400" rx="1.300"/><path d="M18.900 17.100L23 12.300V21.900Z"/></g></svg><svg class="i" style="left:1030px;top:119px" width="6" height="6"><path d="M6 0V6H0Z" fill="#6a6a6a"/></svg><span class="t" style="left:957.3px;top:103px;font-size:13px;color:#d8d8d8;transform-origin:0 50%;transform:scaleX(1.0478);letter-spacing:0.202px;">Perspective</span><div style="position:absolute;left:1626px;top:99px;width:126px;height:26px;background:#1c1d1f;"></div><svg class="i" style="left:1634.5px;top:101px;" width="20" height="22"><use href="#sunbadge"/></svg><svg class="i" style="left:1746px;top:119px" width="6" height="6"><path d="M6 0V6H0Z" fill="#6a6a6a"/></svg><span class="t" style="left:1667.8px;top:103px;font-size:13px;color:#d8d8d8;transform-origin:0 50%;transform:scaleX(1.0476);letter-spacing:0.196px;">Stage Lights</span><div style="position:absolute;left:1766px;top:99px;width:26px;height:26px;background:#1c1d1f;"></div><svg class="i" style="left:1774.2px;top:103.8px;color:#bababa;" width="10.4" height="16"><use href="#mappin"/></svg><div style="position:absolute;left:755px;top:251.5px;width:34px;height:192.0px;background:#1c1e1f;border-radius:6px;"></div><div style="position:absolute;left:759.5px;top:259px;width:25.5px;height:25.5px;background:#1a1c1d;border:1px solid #3d4244;border-radius:4.5px;box-sizing:border-box;"></div><svg class="i" style="left:759.5px;top:259px;color:#7f8c8e;" width="25.5" height="25.5"><use href="#t-cursor"/></svg><div style="position:absolute;left:759.5px;top:289px;width:25.5px;height:25.5px;background:#1f4b60;border:1px solid #2d6178;border-radius:4.5px;box-sizing:border-box;"></div><svg class="i" style="left:759.5px;top:289px;color:#9fb4ba;" width="25.5" height="25.5"><use href="#t-move"/></svg><div style="position:absolute;left:759.5px;top:319px;width:25.5px;height:25.5px;background:#1a1c1d;border:1px solid #3d4244;border-radius:4.5px;box-sizing:border-box;"></div><svg class="i" style="left:759.5px;top:319px;color:#96a2a4;" width="25.5" height="25.5"><use href="#t-rot"/></svg><div style="position:absolute;left:759.5px;top:349px;width:25.5px;height:25.5px;background:#1a1c1d;border:1px solid #3d4244;border-radius:4.5px;box-sizing:border-box;"></div><svg class="i" style="left:759.5px;top:349px;color:#96a2a4;" width="25.5" height="25.5"><use href="#t-scale"/></svg><div style="position:absolute;left:759.5px;top:380px;width:25.5px;height:25.5px;background:#1a1c1d;border:1px solid #3d4244;border-radius:4.5px;box-sizing:border-box;"></div><svg class="i" style="left:759.5px;top:380px;color:#96a2a4;" width="25.5" height="25.5"><use href="#t-mag"/></svg><div style="position:absolute;left:759.5px;top:410px;width:25.5px;height:25.5px;background:#1a1c1d;border:1px solid #3d4244;border-radius:4.5px;box-sizing:border-box;"></div><svg class="i" style="left:759.5px;top:410px;color:#96a2a4;" width="25.5" height="25.5"><use href="#t-frame"/></svg><div style="position:absolute;left:757.5px;top:377px;width:29.0px;height:1px;background:#3d4244;"></div><span class="t" style="left:779.0px;top:538px;font-size:11.5px;color:#5c9a68;">Y</span><div style="position:absolute;left:782.2px;top:555px;width:1.599999999999909px;height:7px;background:#6db86c;"></div><div style="position:absolute;left:768px;top:569px;width:15.5px;height:2px;background:#c96666;"></div><span class="t" style="left:779.3px;top:556px;font-size:11.5px;color:#4a88c4;font-style:italic;">Z</span><span class="t" style="left:756.1px;top:560px;font-size:11.5px;color:#b86060;">X</span><div style="position:absolute;left:1425.5px;top:520.5px;width:370.5px;height:79.0px;background:rgba(31,34,36,0.89);border-radius:5px;"></div><span class="t" style="left:1583.3px;top:527px;font-size:13px;color:#d8d8d8;transform-origin:0 50%;transform:scaleX(1.0183);letter-spacing:0.076px;">FPS: 96.74, Frame time: 10.34 ms</span><span class="t" style="left:1432.3px;top:543px;font-size:13px;color:#d8d8d8;transform-origin:0 50%;transform:scaleX(1.0033);letter-spacing:0.014px;">NVIDIA GeForce RTX 5090: 3.9 GiB used, 26.7 GiB available</span><span class="t" style="left:1500.4px;top:559px;font-size:13px;color:#d8d8d8;transform-origin:0 50%;transform:scaleX(1.0173);letter-spacing:0.070px;">Host Memory: 57.2 GiB used, 69.9 GiB available</span><span class="t" style="left:1717.9px;top:575px;font-size:13px;color:#d8d8d8;transform-origin:0 50%;transform:scaleX(1.0549);letter-spacing:0.273px;">1920x1080</span><svg class="i" style="left:1257px;top:186px" width="48" height="48" viewBox="-24 -24 48 48">
<g fill="#fcc62c"><path id="ray" d="M0 -23L4.600 -13.200H-4.600Z"/><use href="#ray" transform="rotate(45)"/><use href="#ray" transform="rotate(90)"/><use href="#ray" transform="rotate(135)"/><use href="#ray" transform="rotate(180)"/><use href="#ray" transform="rotate(225)"/><use href="#ray" transform="rotate(270)"/><use href="#ray" transform="rotate(315)"/></g>
<circle r="10.400" fill="#fde382"/></svg><svg class="i" style="left:1240px;top:300px" width="80" height="75" viewBox="0 0 80 75" fill="#1be3b1" stroke="#1be3b1">
<path d="M42.600 20V50" fill="none" stroke-width="5"/><path d="M27 28.500L38.500 49" fill="none" stroke-width="5"/><path d="M61 41L46 50" fill="none" stroke-width="4.200"/>
<circle cx="43" cy="19.400" r="7" stroke="none"/><circle cx="26.300" cy="27.500" r="6.700" stroke="none"/><circle cx="51.100" cy="33.500" r="4.100" stroke="none"/><circle cx="20.400" cy="46.400" r="5.600" stroke="none"/><circle cx="62" cy="40.400" r="5.900" stroke="none"/>
<circle cx="41" cy="54.200" r="10" stroke="none"/><circle cx="41" cy="54.200" r="4.900" fill="none" stroke="#f2dfe6" stroke-width="0.800"/></svg><div style="position:absolute;left:745px;top:620px;width:1059px;height:32px;background:#292929;"></div><div style="position:absolute;left:745px;top:620px;width:103px;height:32px;background:#303030;"></div><div style="position:absolute;left:745px;top:652px;width:1059px;height:40px;background:#303030;"></div><span class="t" style="left:776.0px;top:626px;font-size:14px;color:#cccccc;transform-origin:0 50%;transform:scaleX(1.0840);letter-spacing:0.441px;-webkit-text-stroke:0.25px #cccccc;">Prims</span><span class="t" style="left:873.2px;top:626px;font-size:14px;color:#cccccc;transform-origin:0 50%;transform:scaleX(1.0408);letter-spacing:0.248px;-webkit-text-stroke:0.25px #cccccc;">Meshes</span><span class="t" style="left:969.2px;top:626px;font-size:14px;color:#cccccc;transform-origin:0 50%;transform:scaleX(1.0925);letter-spacing:0.390px;-webkit-text-stroke:0.25px #cccccc;">Materials</span><span class="t" style="left:1084.0px;top:626px;font-size:14px;color:#cccccc;transform-origin:0 50%;transform:scaleX(1.0848);letter-spacing:0.372px;-webkit-text-stroke:0.25px #cccccc;">Lights</span><span class="t" style="left:1174.6px;top:626px;font-size:14px;color:#cccccc;transform-origin:0 50%;transform:scaleX(1.0529);letter-spacing:0.253px;-webkit-text-stroke:0.25px #cccccc;">Skeletons</span><span class="t" style="left:1274.7px;top:626px;font-size:14px;color:#cccccc;transform-origin:0 50%;transform:scaleX(1.0568);letter-spacing:0.265px;-webkit-text-stroke:0.25px #cccccc;">Categories</span><span class="t" style="left:1370.6px;top:626px;font-size:14px;color:#cccccc;transform-origin:0 50%;transform:scaleX(1.0475);letter-spacing:0.242px;-webkit-text-stroke:0.25px #cccccc;">Custom Tags</span><span class="t" style="left:1528.1px;top:663px;font-size:13px;color:#d0d0d0;transform-origin:0 50%;transform:scaleX(1.0227);letter-spacing:0.099px;">Prim Reference Type</span><div style="position:absolute;left:1662.5px;top:660px;width:129.0px;height:24px;background:#1e2023;border-radius:4px;"></div><div style="position:absolute;left:1767.5px;top:660px;width:24.0px;height:24px;background:#2b2c2e;border-radius:0 4px 4px 0;"></div><span class="t" style="left:1670.5px;top:663px;font-size:13px;color:#d8d8d8;transform-origin:0 50%;transform:scaleX(1.0048);letter-spacing:0.021px;">All References</span><svg class="i" style="left:1774.5px;top:667px" width="11" height="10"><path d="M0 0H11L5.500 9.500Z" fill="#f4f4f4"/></svg><div style="position:absolute;left:745px;top:692px;width:1048px;height:28px;background:#323535;"></div><span class="t" style="left:756.6px;top:697px;font-size:13px;color:#d4d4d4;transform-origin:0 50%;transform:scaleX(1.0265);letter-spacing:0.120px;">Stage Prims</span><span class="t" style="left:1307.5px;top:697px;font-size:13px;color:#d4d4d4;transform-origin:0 50%;transform:scaleX(1.0607);letter-spacing:0.284px;">Custom Tags</span><span class="t" style="left:1583.6px;top:697px;font-size:13px;color:#d4d4d4;transform-origin:0 50%;transform:scaleX(1.0690);letter-spacing:0.309px;">States</span><span class="t" style="left:1684.3px;top:697px;font-size:13px;color:#d4d4d4;transform-origin:0 50%;transform:scaleX(1.0670);letter-spacing:0.294px;">Actions</span><div style="position:absolute;left:745px;top:720px;width:1048px;height:28px;background:#282828;"></div><svg class="i" style="left:760.1px;top:728.1px;color:#bcbcbc;stroke-width:1;" width="12" height="12"><use href="#chev-d"/></svg><span class="t" style="left:792.4px;top:725px;font-size:13px;color:#d2d2d2;transform-origin:0 50%;transform:scaleX(1.0586);letter-spacing:0.300px;">RootNode</span><svg class="i" style="left:1305px;top:725px;color:#b6b6b6;" width="18" height="18"><use href="#tag"/></svg><svg class="i" style="left:1583px;top:726.5999999999999px;color:#d2d2d2;" width="14" height="15.3"><use href="#db"/></svg><svg class="i" style="left:1609.3px;top:727.1999999999999px;color:#d2d2d2;" width="18" height="16"><use href="#foldeye"/></svg><svg class="i" style="left:1682px;top:726.0px;color:#6a6a6a;" width="16" height="15.5"><use href="#framedot"/></svg><svg class="i" style="left:1708.7px;top:727.6999999999999px;color:#6a6a6a;" width="18.6" height="12.6"><use href="#eye2"/></svg><span class="t" style="left:1737.3px;top:724.0px;font-size:11.5px;color:#6a6a6a;">+</span><span class="t" style="left:1744.1px;top:725.0px;font-size:16px;font-weight:bold;color:#6a6a6a;">R</span><svg class="i" style="left:1764.8px;top:725.1999999999999px;color:#6a6a6a;" width="17.5" height="16.8"><use href="#part"/></svg><div style="position:absolute;left:745px;top:748px;width:1048px;height:28px;background:#2a2a2a;"></div><svg class="i" style="left:776.1px;top:756.1px;color:#bcbcbc;stroke-width:1;" width="12" height="12"><use href="#chev-d"/></svg><span class="t" style="left:808.3px;top:753px;font-size:13px;color:#d2d2d2;transform-origin:0 50%;transform:scaleX(1.0999);letter-spacing:0.352px;">lights</span><svg class="i" style="left:1305px;top:753px;color:#b6b6b6;" width="18" height="18"><use href="#tag"/></svg><svg class="i" style="left:1583px;top:754.5999999999999px;color:#d2d2d2;" width="14" height="15.3"><use href="#db"/></svg><svg class="i" style="left:1609.3px;top:755.1999999999999px;color:#d2d2d2;" width="18" height="16"><use href="#foldeye"/></svg><svg class="i" style="left:1682px;top:754.0px;color:#b8b8b8;" width="16" height="15.5"><use href="#framedot"/></svg><svg class="i" style="left:1708.7px;top:755.6999999999999px;color:#b8b8b8;" width="18.6" height="12.6"><use href="#eye2"/></svg><span class="t" style="left:1737.3px;top:752.0px;font-size:11.5px;color:#6a6a6a;">+</span><span class="t" style="left:1744.1px;top:753.0px;font-size:16px;font-weight:bold;color:#6a6a6a;">R</span><svg class="i" style="left:1764.8px;top:753.1999999999999px;color:#6a6a6a;" width="17.5" height="16.8"><use href="#part"/></svg><div style="position:absolute;left:745px;top:776px;width:1048px;height:28px;background:#282828;"></div><span class="t" style="left:824.4px;top:781px;font-size:13px;color:#d2d2d2;transform-origin:0 50%;transform:scaleX(1.0459);letter-spacing:0.213px;">light_56011EC8AC52046E</span><svg class="i" style="left:1305px;top:781px;color:#b6b6b6;" width="18" height="18"><use href="#tag"/></svg><svg class="i" style="left:1583px;top:782.5999999999999px;color:#d2d2d2;" width="14" height="15.3"><use href="#db"/></svg><svg class="i" style="left:1609.3px;top:783.1999999999999px;color:#d2d2d2;" width="18" height="16"><use href="#foldeye"/></svg><svg class="i" style="left:1682px;top:782.0px;color:#b8b8b8;" width="16" height="15.5"><use href="#framedot"/></svg><svg class="i" style="left:1708.7px;top:783.6999999999999px;color:#b8b8b8;" width="18.6" height="12.6"><use href="#eye2"/></svg><span class="t" style="left:1737.3px;top:780.0px;font-size:11.5px;color:#6a6a6a;">+</span><span class="t" style="left:1744.1px;top:781.0px;font-size:16px;font-weight:bold;color:#6a6a6a;">R</span><svg class="i" style="left:1764.8px;top:781.1999999999999px;color:#6a6a6a;" width="17.5" height="16.8"><use href="#part"/></svg><div style="position:absolute;left:745px;top:804px;width:1048px;height:28px;background:#2a2a2a;"></div><svg class="i" style="left:776.1px;top:812.1px;color:#bcbcbc;stroke-width:1;" width="12" height="12"><use href="#chev-r"/></svg><span class="t" style="left:808.5px;top:809px;font-size:13px;color:#d2d2d2;transform-origin:0 50%;transform:scaleX(1.0414);letter-spacing:0.234px;">meshes</span><svg class="i" style="left:1305px;top:809px;color:#b6b6b6;" width="18" height="18"><use href="#tag"/></svg><svg class="i" style="left:1583px;top:810.5999999999999px;color:#d2d2d2;" width="14" height="15.3"><use href="#db"/></svg><svg class="i" style="left:1609.3px;top:811.1999999999999px;color:#d2d2d2;" width="18" height="16"><use href="#foldeye"/></svg><svg class="i" style="left:1682px;top:810.0px;color:#6a6a6a;" width="16" height="15.5"><use href="#framedot"/></svg><svg class="i" style="left:1708.7px;top:811.6999999999999px;color:#6a6a6a;" width="18.6" height="12.6"><use href="#eye2"/></svg><span class="t" style="left:1737.3px;top:808.0px;font-size:11.5px;color:#6a6a6a;">+</span><span class="t" style="left:1744.1px;top:809.0px;font-size:16px;font-weight:bold;color:#6a6a6a;">R</span><svg class="i" style="left:1764.8px;top:809.1999999999999px;color:#6a6a6a;" width="17.5" height="16.8"><use href="#part"/></svg><div style="position:absolute;left:745px;top:832px;width:1048px;height:28px;background:#282828;"></div><svg class="i" style="left:776.1px;top:840.1px;color:#bcbcbc;stroke-width:1;" width="12" height="12"><use href="#chev-r"/></svg><span class="t" style="left:808.2px;top:837px;font-size:13px;color:#d2d2d2;transform-origin:0 50%;transform:scaleX(1.0563);letter-spacing:0.295px;">Looks</span><svg class="i" style="left:1305px;top:837px;color:#b6b6b6;" width="18" height="18"><use href="#tag"/></svg><svg class="i" style="left:1583px;top:838.5999999999999px;color:#d2d2d2;" width="14" height="15.3"><use href="#db"/></svg><svg class="i" style="left:1609.3px;top:839.1999999999999px;color:#d2d2d2;" width="18" height="16"><use href="#foldeye"/></svg><svg class="i" style="left:1682px;top:838.0px;color:#6a6a6a;" width="16" height="15.5"><use href="#framedot"/></svg><svg class="i" style="left:1708.7px;top:839.6999999999999px;color:#6a6a6a;" width="18.6" height="12.6"><use href="#eye2"/></svg><span class="t" style="left:1737.3px;top:836.0px;font-size:11.5px;color:#6a6a6a;">+</span><span class="t" style="left:1744.1px;top:837.0px;font-size:16px;font-weight:bold;color:#6a6a6a;">R</span><svg class="i" style="left:1764.8px;top:837.1999999999999px;color:#6a6a6a;" width="17.5" height="16.8"><use href="#part"/></svg><div style="position:absolute;left:745px;top:860px;width:1048px;height:28px;background:#2a2a2a;"></div><svg class="i" style="left:776.1px;top:868.1px;color:#bcbcbc;stroke-width:1;" width="12" height="12"><use href="#chev-d"/></svg><span class="t" style="left:808.4px;top:865px;font-size:13px;color:#d2d2d2;transform-origin:0 50%;transform:scaleX(1.0616);letter-spacing:0.260px;">instances</span><svg class="i" style="left:1305px;top:865px;color:#b6b6b6;" width="18" height="18"><use href="#tag"/></svg><svg class="i" style="left:1583px;top:866.5999999999999px;color:#d2d2d2;" width="14" height="15.3"><use href="#db"/></svg><svg class="i" style="left:1609.3px;top:867.1999999999999px;color:#d2d2d2;" width="18" height="16"><use href="#foldeye"/></svg><svg class="i" style="left:1682px;top:866.0px;color:#b8b8b8;" width="16" height="15.5"><use href="#framedot"/></svg><svg class="i" style="left:1708.7px;top:867.6999999999999px;color:#b8b8b8;" width="18.6" height="12.6"><use href="#eye2"/></svg><span class="t" style="left:1737.3px;top:864.0px;font-size:11.5px;color:#6a6a6a;">+</span><span class="t" style="left:1744.1px;top:865.0px;font-size:16px;font-weight:bold;color:#6a6a6a;">R</span><svg class="i" style="left:1764.8px;top:865.1999999999999px;color:#6a6a6a;" width="17.5" height="16.8"><use href="#part"/></svg><div style="position:absolute;left:745px;top:888px;width:1048px;height:28px;background:#282828;"></div><svg class="i" style="left:792.1px;top:896.1px;color:#bcbcbc;stroke-width:1;" width="12" height="12"><use href="#chev-r"/></svg><span class="t" style="left:824.5px;top:893px;font-size:13px;color:#d2d2d2;transform-origin:0 50%;transform:scaleX(1.0405);letter-spacing:0.196px;">inst_1D5BEF743BE54A65_0</span><svg class="i" style="left:1305px;top:893px;color:#b6b6b6;" width="18" height="18"><use href="#tag"/></svg><svg class="i" style="left:1583px;top:894.5999999999999px;color:#d2d2d2;" width="14" height="15.3"><use href="#db"/></svg><svg class="i" style="left:1609.3px;top:895.1999999999999px;color:#d2d2d2;" width="18" height="16"><use href="#foldeye"/></svg><svg class="i" style="left:1682px;top:894.0px;color:#b8b8b8;" width="16" height="15.5"><use href="#framedot"/></svg><svg class="i" style="left:1708.7px;top:895.6999999999999px;color:#b8b8b8;" width="18.6" height="12.6"><use href="#eye2"/></svg><span class="t" style="left:1737.3px;top:892.0px;font-size:11.5px;color:#6a6a6a;">+</span><span class="t" style="left:1744.1px;top:893.0px;font-size:16px;font-weight:bold;color:#6a6a6a;">R</span><svg class="i" style="left:1764.8px;top:893.1999999999999px;color:#6a6a6a;" width="17.5" height="16.8"><use href="#part"/></svg><div style="position:absolute;left:745px;top:916px;width:1048px;height:28px;background:#2a2a2a;"></div><svg class="i" style="left:792.1px;top:924.1px;color:#bcbcbc;stroke-width:1;" width="12" height="12"><use href="#chev-d"/></svg><span class="t" style="left:824.5px;top:921px;font-size:13px;color:#d2d2d2;transform-origin:0 50%;transform:scaleX(1.0411);letter-spacing:0.201px;">inst_9858949B5B49CCDC_0</span><svg class="i" style="left:1305px;top:921px;color:#b6b6b6;" width="18" height="18"><use href="#tag"/></svg><svg class="i" style="left:1583px;top:922.5999999999999px;color:#d2d2d2;" width="14" height="15.3"><use href="#db"/></svg><svg class="i" style="left:1609.3px;top:923.1999999999999px;color:#d2d2d2;" width="18" height="16"><use href="#foldeye"/></svg><svg class="i" style="left:1682px;top:922.0px;color:#b8b8b8;" width="16" height="15.5"><use href="#framedot"/></svg><svg class="i" style="left:1708.7px;top:923.6999999999999px;color:#b8b8b8;" width="18.6" height="12.6"><use href="#eye2"/></svg><span class="t" style="left:1737.3px;top:920.0px;font-size:11.5px;color:#6a6a6a;">+</span><span class="t" style="left:1744.1px;top:921.0px;font-size:16px;font-weight:bold;color:#6a6a6a;">R</span><svg class="i" style="left:1764.8px;top:921.1999999999999px;color:#6a6a6a;" width="17.5" height="16.8"><use href="#part"/></svg><div style="position:absolute;left:745px;top:944px;width:1048px;height:28px;background:#282828;"></div><span class="t" style="left:840.5px;top:949px;font-size:13px;color:#d2d2d2;transform-origin:0 50%;transform:scaleX(1.0559);letter-spacing:0.355px;">mesh</span><svg class="i" style="left:1305px;top:949px;color:#b6b6b6;" width="18" height="18"><use href="#tag"/></svg><svg class="i" style="left:1583px;top:950.5999999999999px;color:#d2d2d2;" width="14" height="15.3"><use href="#db"/></svg><svg class="i" style="left:1609.3px;top:951.1999999999999px;color:#d2d2d2;" width="18" height="16"><use href="#foldeye"/></svg><svg class="i" style="left:1682px;top:950.0px;color:#b8b8b8;" width="16" height="15.5"><use href="#framedot"/></svg><svg class="i" style="left:1708.7px;top:951.6999999999999px;color:#b8b8b8;" width="18.6" height="12.6"><use href="#eye2"/></svg><span class="t" style="left:1737.3px;top:948.0px;font-size:11.5px;color:#c4c4c4;">+</span><span class="t" style="left:1744.1px;top:949.0px;font-size:16px;font-weight:bold;color:#c4c4c4;">R</span><svg class="i" style="left:1764.8px;top:949.1999999999999px;color:#c8c8c8;" width="17.5" height="16.8"><use href="#partx"/></svg><div style="position:absolute;left:1295.7px;top:692px;width:1.599999999999909px;height:306px;background:#474747;"></div><div style="position:absolute;left:1572.2px;top:692px;width:1.599999999999909px;height:306px;background:#474747;"></div><div style="position:absolute;left:1674.5px;top:692px;width:1.599999999999909px;height:306px;background:#474747;"></div><span class="t" style="left:753.3px;top:976px;font-size:13px;color:#d2d2d2;transform-origin:0 50%;transform:scaleX(1.0249);letter-spacing:0.098px;">17 prims available</span><div style="position:absolute;left:1793px;top:692px;width:11px;height:280px;background:#2c2c2c;"></div><div style="position:absolute;left:1795px;top:695px;width:6px;height:246.5px;background:#ababab;border-radius:3px;"></div></div></body></html>
